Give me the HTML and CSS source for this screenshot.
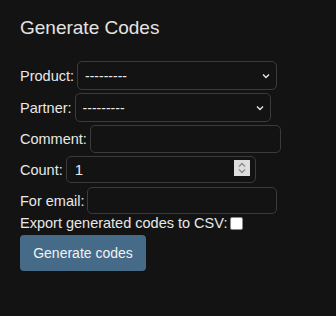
FILE: index.html
```html
<!DOCTYPE html>
<html>
<head>
  <title>Generate Codes</title>
  <link rel="stylesheet" href="styles.css">
</head>
<body>
  <div class="container">
    <h2>Generate Codes</h2>
    <form class="codes-form">
      <div class="form-row">
        <label for="product">Product:</label>
        <div class="select-wrap product-select">
          <select id="product"><option>---------</option></select>
          <svg class="chevron" width="8" height="6" viewBox="0 0 8 6"><path d="M1 1.5 L4 4.5 L7 1.5" fill="none" stroke="#e6e6e6" stroke-width="1.4"/></svg>
        </div>
      </div>
      <div class="form-row">
        <label for="partner">Partner:</label>
        <div class="select-wrap partner-select">
          <select id="partner"><option>---------</option></select>
          <svg class="chevron" width="8" height="6" viewBox="0 0 8 6"><path d="M1 1.5 L4 4.5 L7 1.5" fill="none" stroke="#e6e6e6" stroke-width="1.4"/></svg>
        </div>
      </div>
      <div class="form-row">
        <label for="comment">Comment:</label>
        <input type="text" id="comment">
      </div>
      <div class="form-row count-row">
        <label for="count">Count:</label>
        <div class="number-wrap">
          <input type="text" id="count" value="1">
          <span class="spinner">
            <svg width="16" height="16" viewBox="0 0 16 16"><path d="M5 6.5 L8 3.5 L11 6.5 M5 9.5 L8 12.5 L11 9.5" fill="none" stroke="#8a8a8a" stroke-width="1.3"/></svg>
          </span>
        </div>
      </div>
      <div class="form-row email-row">
        <label for="email">For email:</label>
        <input type="text" id="email">
      </div>
      <div class="form-row check-row">
        <label for="export">Export generated codes to CSV:</label>
        <span class="checkbox"></span>
      </div>
      <button type="button" class="submit-button">Generate codes</button>
    </form>
  </div>
</body>
</html>
```

FILE: styles.css
```css
body {
  font-family: "Liberation Sans", Arial, sans-serif;
  background-color: #131313;
  color: #e8e8e8;
  margin: 0;
  padding: 0;
}

.container {
  padding: 17px 20px;
}

h2 {
  font-weight: normal;
  font-size: 19px;
  margin: 0 0 22px 0;
  color: #e4e4e4;
}

.codes-form {
  display: flex;
  flex-direction: column;
  align-items: flex-start;
}

.form-row {
  display: flex;
  align-items: center;
  font-size: 14.5px;
  margin-bottom: 3px;
}

.form-row label {
  margin-right: 3px;
}

.select-wrap,
.number-wrap {
  position: relative;
}

.form-row select,
.form-row input {
  box-sizing: border-box;
  background-color: #131313;
  color: #e8e8e8;
  border: 1px solid #3b3b3b;
  border-radius: 5px;
  font-family: "Liberation Sans", Arial, sans-serif;
  font-size: 15px;
  outline: none;
}

.form-row select {
  appearance: none;
  -webkit-appearance: none;
  height: 29px;
  padding: 0 0 0 7px;
  font-size: 14px;
}

.product-select select {
  width: 200px;
}

.partner-select select {
  width: 196px;
}

.chevron {
  position: absolute;
  right: 7px;
  top: 12px;
}

.form-row input {
  width: 191px;
  height: 28px;
  padding: 0 8px;
}

.count-row input {
  width: 190px;
  height: 27px;
}

.email-row {
  margin-top: 1px;
}

.email-row input {
  width: 190px;
  height: 27px;
}

.spinner {
  position: absolute;
  right: 6px;
  top: 4px;
  width: 16px;
  height: 16px;
  background-color: #dedede;
}

.spinner svg {
  display: block;
}

.check-row {
  margin-top: -2px;
  margin-bottom: 4px;
}

.check-row label {
  margin-right: 3px;
}

.checkbox {
  display: block;
  width: 11px;
  height: 11px;
  background-color: #ffffff;
  border: 1px solid #8a8a8a;
  border-radius: 2px;
}

.submit-button {
  width: 126px;
  height: 36px;
  background-color: #466b88;
  color: #f2f2f2;
  border: none;
  border-radius: 4px;
  font-family: "Liberation Sans", Arial, sans-serif;
  font-size: 14px;
  cursor: pointer;
}
```
